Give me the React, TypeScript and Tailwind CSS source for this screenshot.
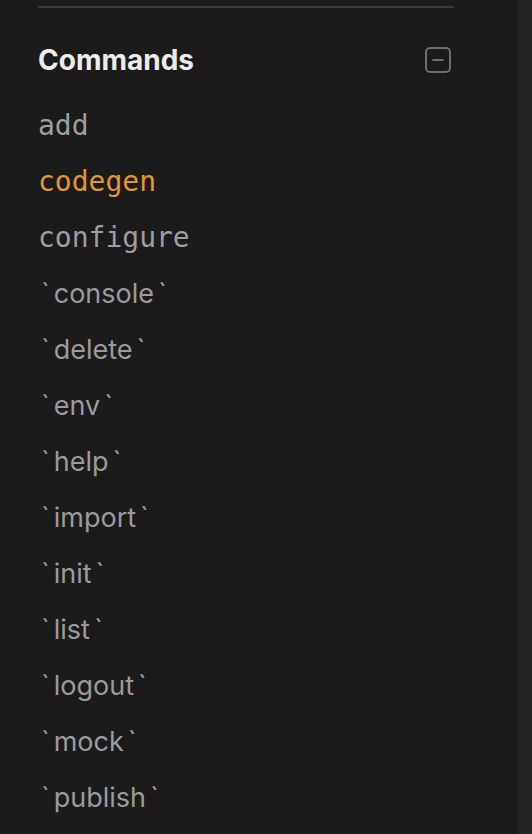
import React from "react";

const items: { label: string; mono?: boolean; active?: boolean }[] = [
  { label: "add", mono: true },
  { label: "codegen", mono: true, active: true },
  { label: "configure", mono: true },
  { label: "console" },
  { label: "delete" },
  { label: "env" },
  { label: "help" },
  { label: "import" },
  { label: "init" },
  { label: "list" },
  { label: "logout" },
  { label: "mock" },
  { label: "publish" },
];

export default function App() {
  return (
    <div className="flex h-[834px] w-[532px] overflow-hidden bg-[#1b1b1b]" style={{ fontFamily: "Inter, 'Noto Sans', sans-serif" }}>
      <div className="flex flex-1 flex-col pl-[38px] pr-[64px]">
        <div className="mt-[6px] h-[2px] w-full bg-[#3a3a3a]" />
        <div className="mt-[38px] flex h-[28px] items-center justify-between">
          <span className="text-[28px] font-bold leading-none text-[#ececec]">Commands</span>
          <div className="mr-[3px] flex h-[26px] w-[26px] items-center justify-center rounded-[5px] border-2 border-[#6e6e6e]">
            <div className="h-[2px] w-[12px] rounded bg-[#6e6e6e]" />
          </div>
        </div>
        <div className="mt-[23px] flex flex-col">
          {items.map((it) => (
            <div key={it.label} className="flex h-[56px] items-center">
              {it.mono ? (
                <span
                  className={`pt-[2px] text-[28px] leading-none ${it.active ? "text-[#e3952f]" : "text-[#9e9e9e]"}`}
                  style={{ fontFamily: "'DejaVu Sans Mono', monospace" }}
                >
                  {it.label}
                </span>
              ) : (
                <span className="flex text-[27px] leading-none text-[#9b9b9b]">
                  <span className="ml-[3px] mr-[4px]">`</span>
                  <span>{it.label}</span>
                  <span className="ml-[4px]">`</span>
                </span>
              )}
            </div>
          ))}
        </div>
      </div>
      <div className="w-[14px] bg-[#242424]" />
    </div>
  );
}
